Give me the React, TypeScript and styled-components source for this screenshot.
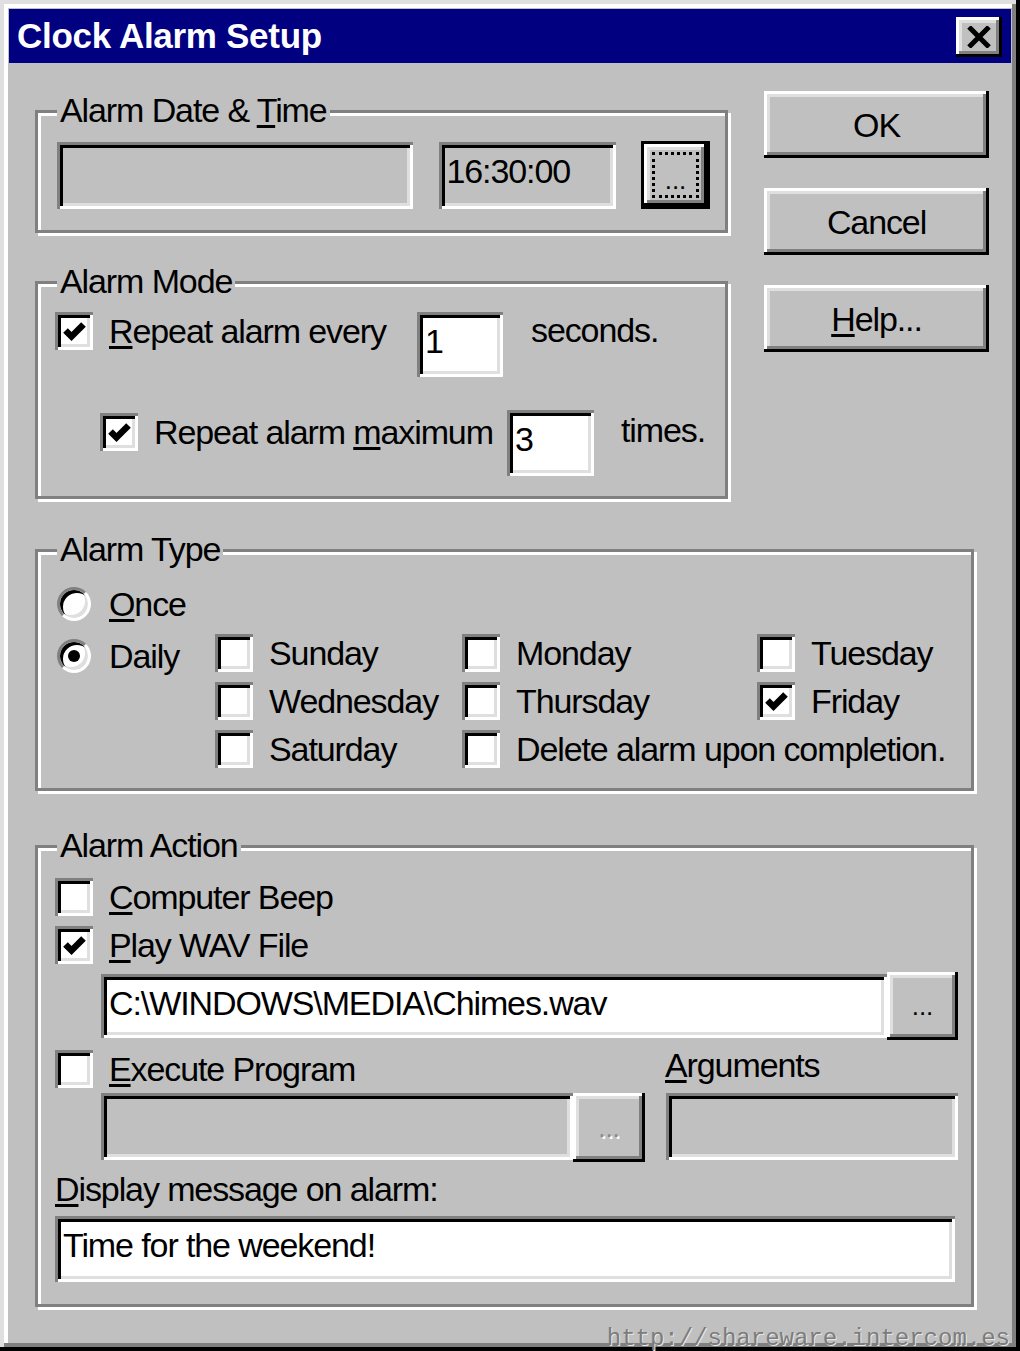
import React from 'react';
import styled, { createGlobalStyle, css } from 'styled-components';

const GlobalStyle = createGlobalStyle`
  html, body { margin: 0; padding: 0; background: #c0c0c0; }
  body { font-family: "Liberation Sans", Arial, sans-serif; }
  u { text-decoration-thickness: 3px; text-underline-offset: 3px; }
`;

const raised = css`
  background: #c0c0c0;
  box-shadow: inset -3px -3px 0 #000, inset 3px 3px 0 #fff, inset -6px -6px 0 #808080, inset 6px 6px 0 #dfdfdf;
`;

const sunken = css`
  box-shadow: inset 3px 3px 0 #808080, inset -3px -3px 0 #fff, inset 6px 6px 0 #000, inset -6px -6px 0 #dfdfdf;
`;

const Window = styled.div`
  position: relative;
  width: 1020px;
  height: 1351px;
  box-sizing: border-box;
  padding: 9px;
  background: #c0c0c0;
  box-shadow: inset -4px -4px 0 #000, inset 4px 4px 0 #dfdfdf, inset -8px -8px 0 #808080, inset 8px 8px 0 #fff;
  overflow: hidden;
  font-family: "Liberation Sans", Arial, sans-serif;
  font-size: 34px;
  letter-spacing: -1.1px;
  line-height: 38px;
  color: #000;
`;

const TitleBar = styled.div`
  height: 54px;
  background: #000080;
  display: flex;
  align-items: center;
  justify-content: space-between;
  padding: 0 9px 0 8px;
`;

const TitleText = styled.span`
  color: #fff;
  font-weight: bold;
  font-size: 35px;
  letter-spacing: -0.3px;
  line-height: 40px;
`;

const CloseButton = styled.div`
  ${raised};
  width: 46px;
  height: 40px;
  display: flex;
  align-items: center;
  justify-content: center;
  margin-top: 2px;
`;

const Body = styled.div`
  padding-left: 26px;
`;

const TopRow = styled.div`
  display: flex;
  align-items: flex-start;
`;

const LeftCol = styled.div`
  margin-top: 47px;
  display: flex;
  flex-direction: column;
  gap: 48px;
`;

const RightCol = styled.div`
  margin-top: 28px;
  margin-left: 36px;
  display: flex;
  flex-direction: column;
  gap: 30px;
`;

const PushButton = styled.div`
  ${raised};
  width: 225px;
  height: 67px;
  display: flex;
  align-items: center;
  justify-content: center;
`;

const Group = styled.div<{ $w: number; $h: number; $pt: number; $pl?: number; $mt?: number }>`
  position: relative;
  box-sizing: border-box;
  width: ${p => p.$w}px;
  height: ${p => p.$h}px;
  margin-top: ${p => p.$mt ?? 0}px;
  border: 3px solid #808080;
  box-shadow: inset 3px 3px 0 #fff, 3px 3px 0 #fff;
  padding: ${p => p.$pt}px 0 0 ${p => p.$pl ?? 17}px;
`;

const Caption = styled.span`
  position: absolute;
  top: -22px;
  left: 19px;
  padding: 0 3px;
  background: #c0c0c0;
  white-space: nowrap;
`;

const FieldRow = styled.div`
  width: 653px;
  display: flex;
  align-items: center;
  justify-content: space-between;
`;

const Field = styled.div<{ $w: number; $h?: number; $white?: boolean; $ml?: number; $mt?: number }>`
  ${sunken};
  box-sizing: border-box;
  width: ${p => p.$w}px;
  height: ${p => p.$h ?? 66}px;
  margin-left: ${p => p.$ml ?? 0}px;
  margin-top: ${p => p.$mt ?? 0}px;
  flex: none;
  background: ${p => (p.$white ? '#fff' : '#c0c0c0')};
  padding: 10px 0 0 8px;
  white-space: nowrap;
  overflow: hidden;
`;

const DefaultButton = styled.div`
  ${raised};
  box-sizing: border-box;
  width: 69px;
  height: 68px;
  border: 3px solid #000;
  padding: 8px;
  display: flex;
`;

const FocusRect = styled.div`
  flex: 1;
  border: 3px dotted #000;
  display: flex;
  align-items: flex-end;
  justify-content: center;
  padding-bottom: 2px;
`;

const Dots = styled.span<{ $disabled?: boolean }>`
  font-size: 26px;
  line-height: 26px;
  letter-spacing: 0;
  color: ${p => (p.$disabled ? '#8a8a8a' : '#000')};
  text-shadow: ${p => (p.$disabled ? '2px 2px 0 #fff' : 'none')};
`;

const BrowseButton = styled.div<{ $w: number; $h: number }>`
  ${raised};
  box-sizing: border-box;
  width: ${p => p.$w}px;
  height: ${p => p.$h}px;
  flex: none;
  display: flex;
  align-items: center;
  justify-content: center;
`;

const ModeRow = styled.div<{ $indent?: number; $mt?: number }>`
  display: flex;
  align-items: flex-start;
  padding-left: ${p => p.$indent ?? 0}px;
  margin-top: ${p => p.$mt ?? 0}px;
`;

const CheckItem = styled.div<{ $w?: number; $mt?: number }>`
  display: flex;
  align-items: center;
  gap: 16px;
  height: 38px;
  white-space: nowrap;
  flex: none;
  width: ${p => (p.$w ? `${p.$w}px` : 'auto')};
  margin-top: ${p => p.$mt ?? 0}px;
`;

const TrailText = styled.span<{ $ml: number; $mt?: number }>`
  margin-left: ${p => p.$ml}px;
  margin-top: ${p => p.$mt ?? 0}px;
  white-space: nowrap;
`;

const Box = styled.div`
  ${sunken};
  width: 38px;
  height: 38px;
  flex: none;
  background: #fff;
  display: flex;
`;

const RadioCircle = styled.div`
  box-sizing: border-box;
  width: 34px;
  height: 34px;
  margin: 0 2px;
  flex: none;
  border-radius: 50%;
  background: #fff;
  border: 3px solid;
  border-color: #808080 #fff #fff #808080;
  box-shadow: inset 3px 3px 0 #000, inset -3px -3px 0 #dfdfdf;
  display: flex;
  align-items: center;
  justify-content: center;
`;

const RadioDot = styled.div`
  width: 12px;
  height: 12px;
  border-radius: 50%;
  background: #000;
`;

const DailyRow = styled.div`
  display: flex;
  align-items: flex-start;
  margin-top: 11px;
`;

const DailyLabel = styled.div`
  width: 160px;
  flex: none;
  display: flex;
  align-items: center;
  gap: 16px;
  height: 38px;
  margin-top: 3px;
`;

const DayGrid = styled.div`
  display: grid;
  grid-template-columns: 247px 295px auto;
  grid-auto-rows: 38px;
  row-gap: 10px;
`;

const WideCell = styled.div`
  grid-column: span 2;
`;

const Stack = styled.div`
  display: flex;
  flex-direction: column;
  align-items: flex-start;
`;

const ControlRow = styled.div<{ $indent?: number; $mt?: number; $align?: string }>`
  display: flex;
  align-items: ${p => p.$align ?? 'center'};
  padding-left: ${p => p.$indent ?? 0}px;
  margin-top: ${p => p.$mt ?? 0}px;
`;

const PlainLabel = styled.div<{ $mt?: number }>`
  height: 38px;
  white-space: nowrap;
  margin-top: ${p => p.$mt ?? 0}px;
`;

const Watermark = styled.div`
  position: absolute;
  right: 10px;
  bottom: -5px;
  font-family: "Liberation Mono", "DejaVu Sans Mono", monospace;
  font-size: 24px;
  letter-spacing: 0;
  line-height: 34px;
  color: #7c7c7c;
  text-shadow: 1px 1px 0 #e6e6e6;
`;

const Check: React.FC<{ checked?: boolean }> = ({ checked }) => (
  <Box>
    {checked && (
      <svg width="38" height="38" viewBox="0 0 38 38">
        <polyline points="10.5,18.5 16.5,24.5 28.5,12.5" fill="none" stroke="#000" strokeWidth="6.5" />
      </svg>
    )}
  </Box>
);

const Radio: React.FC<{ checked?: boolean }> = ({ checked }) => (
  <RadioCircle>{checked && <RadioDot />}</RadioCircle>
);

export default function App() {
  return (
    <>
      <GlobalStyle />
      <Window>
        <TitleBar>
          <TitleText>Clock Alarm Setup</TitleText>
          <CloseButton>
            <svg width="26" height="22" viewBox="0 0 26 22">
              <path d="M3 1 L23 21 M23 1 L3 21" stroke="#000" strokeWidth="5" fill="none" />
            </svg>
          </CloseButton>
        </TitleBar>
        <Body>
          <TopRow>
            <LeftCol>
              <Group $w={693} $h={123} $pt={28} $pl={19}>
                <Caption>
                  Alarm Date &amp; <u>T</u>ime
                </Caption>
                <FieldRow>
                  <Field $w={356} $h={67} />
                  <Field $w={177} $h={67}>16:30:00</Field>
                  <DefaultButton>
                    <FocusRect>
                      <Dots>...</Dots>
                    </FocusRect>
                  </DefaultButton>
                </FieldRow>
              </Group>
              <Group $w={693} $h={218} $pt={28}>
                <Caption>Alarm Mode</Caption>
                <ModeRow>
                  <CheckItem $w={362}>
                    <Check checked />
                    <span>
                      <u>R</u>epeat alarm every
                    </span>
                  </CheckItem>
                  <Field $w={86} $h={65} $white>1</Field>
                  <TrailText $ml={28} $mt={-1}>seconds.</TrailText>
                </ModeRow>
                <ModeRow $indent={45} $mt={33}>
                  <CheckItem $w={407} $mt={3}>
                    <Check checked />
                    <span>
                      Repeat alarm <u>m</u>aximum
                    </span>
                  </CheckItem>
                  <Field $w={87} $h={66} $white>3</Field>
                  <TrailText $ml={27} $mt={1}>times.</TrailText>
                </ModeRow>
              </Group>
            </LeftCol>
            <RightCol>
              <PushButton>OK</PushButton>
              <PushButton>Cancel</PushButton>
              <PushButton>
                <span>
                  <u>H</u>elp...
                </span>
              </PushButton>
            </RightCol>
          </TopRow>

          <Group $w={939} $h={242} $pt={33} $mt={50}>
            <Caption>Alarm Type</Caption>
            <CheckItem>
              <Radio />
              <span>
                <u>O</u>nce
              </span>
            </CheckItem>
            <DailyRow>
              <DailyLabel>
                <Radio checked />
                <span>Daily</span>
              </DailyLabel>
              <DayGrid>
                <CheckItem>
                  <Check />
                  <span>Sunday</span>
                </CheckItem>
                <CheckItem>
                  <Check />
                  <span>Monday</span>
                </CheckItem>
                <CheckItem>
                  <Check />
                  <span>Tuesday</span>
                </CheckItem>
                <CheckItem>
                  <Check />
                  <span>Wednesday</span>
                </CheckItem>
                <CheckItem>
                  <Check />
                  <span>Thursday</span>
                </CheckItem>
                <CheckItem>
                  <Check checked />
                  <span>Friday</span>
                </CheckItem>
                <CheckItem>
                  <Check />
                  <span>Saturday</span>
                </CheckItem>
                <WideCell>
                  <CheckItem>
                    <Check />
                    <span>Delete alarm upon completion.</span>
                  </CheckItem>
                </WideCell>
              </DayGrid>
            </DailyRow>
          </Group>

          <Group $w={939} $h={462} $pt={30} $mt={54}>
            <Caption>Alarm Action</Caption>
            <Stack>
              <CheckItem>
                <Check />
                <span>
                  <u>C</u>omputer Beep
                </span>
              </CheckItem>
              <CheckItem $mt={10}>
                <Check checked />
                <span>
                  <u>P</u>lay WAV File
                </span>
              </CheckItem>
              <ControlRow $indent={46} $mt={8}>
                <Field $w={786} $h={64} $white>
                  {'C:\\WINDOWS\\MEDIA\\Chimes.wav'}
                </Field>
                <BrowseButton $w={71} $h={68}>
                  <Dots>...</Dots>
                </BrowseButton>
              </ControlRow>
              <ControlRow $mt={10} $align="flex-start">
                <CheckItem $w={610}>
                  <Check />
                  <span>
                    <u>E</u>xecute Program
                  </span>
                </CheckItem>
                <PlainLabel $mt={-4}>
                  <u>A</u>rguments
                </PlainLabel>
              </ControlRow>
              <ControlRow $indent={46} $mt={5} $align="flex-start">
                <Field $w={472} $h={67} />
                <BrowseButton $w={72} $h={69}>
                  <Dots $disabled>...</Dots>
                </BrowseButton>
                <Field $w={292} $h={67} $ml={21} />
              </ControlRow>
              <PlainLabel $mt={8}>
                <u>D</u>isplay message on alarm:
              </PlainLabel>
              <Field $w={900} $h={66} $mt={8} $white>
                Time for the weekend!
              </Field>
            </Stack>
          </Group>
        </Body>
        <Watermark>http://shareware.intercom.es</Watermark>
      </Window>
    </>
  );
}
